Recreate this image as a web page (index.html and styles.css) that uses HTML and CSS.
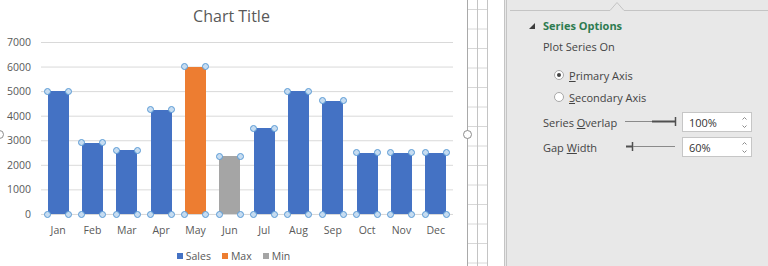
FILE: index.html
```html
<!DOCTYPE html>
<html lang="en">
<head>
    <meta charset="UTF-8">
    <meta name="viewport" content="width=device-width, initial-scale=1.0">
    <title>Format Data Series</title>
    <link rel="stylesheet" href="styles.css">
</head>
<body>
    <div class="chart">
        <span class="frame-handle left"></span>
        <span class="frame-handle right"></span>

        <h2 class="chart-title">Chart Title</h2>

        <div class="plot-row">
            <div class="y-axis">
                <span>7000</span>
                <span>6000</span>
                <span>5000</span>
                <span>4000</span>
                <span>3000</span>
                <span>2000</span>
                <span>1000</span>
                <span>0</span>
            </div>
            <div class="plot">
                <div class="col"><div class="bar sales" style="height: 71.43%"><i class="h tl"></i><i class="h tr"></i><i class="h bl"></i><i class="h br"></i></div></div>
                <div class="col"><div class="bar sales" style="height: 41.43%"><i class="h tl"></i><i class="h tr"></i><i class="h bl"></i><i class="h br"></i></div></div>
                <div class="col"><div class="bar sales" style="height: 37.14%"><i class="h tl"></i><i class="h tr"></i><i class="h bl"></i><i class="h br"></i></div></div>
                <div class="col"><div class="bar sales" style="height: 60.71%"><i class="h tl"></i><i class="h tr"></i><i class="h bl"></i><i class="h br"></i></div></div>
                <div class="col"><div class="bar max" style="height: 85.71%"><i class="h tl"></i><i class="h tr"></i><i class="h bl"></i><i class="h br"></i></div></div>
                <div class="col"><div class="bar min" style="height: 33.57%"><i class="h tl"></i><i class="h tr"></i><i class="h bl"></i><i class="h br"></i></div></div>
                <div class="col"><div class="bar sales" style="height: 50%"><i class="h tl"></i><i class="h tr"></i><i class="h bl"></i><i class="h br"></i></div></div>
                <div class="col"><div class="bar sales" style="height: 71.43%"><i class="h tl"></i><i class="h tr"></i><i class="h bl"></i><i class="h br"></i></div></div>
                <div class="col"><div class="bar sales" style="height: 65.71%"><i class="h tl"></i><i class="h tr"></i><i class="h bl"></i><i class="h br"></i></div></div>
                <div class="col"><div class="bar sales" style="height: 35.71%"><i class="h tl"></i><i class="h tr"></i><i class="h bl"></i><i class="h br"></i></div></div>
                <div class="col"><div class="bar sales" style="height: 35.71%"><i class="h tl"></i><i class="h tr"></i><i class="h bl"></i><i class="h br"></i></div></div>
                <div class="col"><div class="bar sales" style="height: 35.71%"><i class="h tl"></i><i class="h tr"></i><i class="h bl"></i><i class="h br"></i></div></div>
            </div>
        </div>

        <div class="x-axis">
            <span>Jan</span><span>Feb</span><span>Mar</span><span>Apr</span>
            <span>May</span><span>Jun</span><span>Jul</span><span>Aug</span>
            <span>Sep</span><span>Oct</span><span>Nov</span><span>Dec</span>
        </div>

        <div class="legend">
            <span class="legend-item"><i class="swatch sales"></i>Sales</span>
            <span class="legend-item"><i class="swatch max"></i>Max</span>
            <span class="legend-item"><i class="swatch min"></i>Min</span>
        </div>
    </div>

    <div class="cells">
        <div class="cell"></div>
        <div class="cell"></div>
    </div>
    <div class="gap"></div>

    <div class="pane">
        <svg class="pane-head" width="261" height="12" viewBox="0 0 261 12">
            <polyline points="3,10.5 103,10.5 110,2.5 117,10.5 261,10.5" fill="none" stroke="#c4c4c4" stroke-width="1"/>
        </svg>

        <div class="section-head">
            <svg width="6" height="6" viewBox="0 0 6 6"><polygon points="6,0 6,6 0,6" fill="#3c3c3c"/></svg>
            <span>Series Options</span>
        </div>

        <div class="label-row">Plot Series On</div>

        <div class="radios">
            <div class="radio-row">
                <span class="radio checked"></span>
                <span><u>P</u>rimary Axis</span>
            </div>
            <div class="radio-row">
                <span class="radio"></span>
                <span><u>S</u>econdary Axis</span>
            </div>
        </div>

        <div class="spin-row">
            <span class="spin-label">Series <u>O</u>verlap</span>
            <svg class="slider" width="52" height="20" viewBox="0 0 52 20">
                <line x1="0" y1="9.5" x2="27" y2="9.5" stroke="#8a8a8a" stroke-width="1"/>
                <line x1="27" y1="9.5" x2="50" y2="9.5" stroke="#505050" stroke-width="2"/>
                <line x1="50.5" y1="5" x2="50.5" y2="14" stroke="#505050" stroke-width="1.5"/>
            </svg>
            <div class="spin-box">
                <span>100%</span>
                <span class="arrows">
                    <svg width="5" height="3" viewBox="0 0 5 3"><polyline points="0.5,2.5 2.5,0.5 4.5,2.5" fill="none" stroke="#8a8a8a"/></svg>
                    <svg width="5" height="3" viewBox="0 0 5 3"><polyline points="0.5,0.5 2.5,2.5 4.5,0.5" fill="none" stroke="#8a8a8a"/></svg>
                </span>
            </div>
        </div>

        <div class="spin-row">
            <span class="spin-label">Gap <u>W</u>idth</span>
            <svg class="slider" width="52" height="20" viewBox="0 0 52 20">
                <line x1="1" y1="9.5" x2="7" y2="9.5" stroke="#505050" stroke-width="2"/>
                <line x1="7.5" y1="5" x2="7.5" y2="14" stroke="#505050" stroke-width="1.5"/>
                <line x1="8" y1="9.5" x2="50" y2="9.5" stroke="#8a8a8a" stroke-width="1"/>
            </svg>
            <div class="spin-box">
                <span>60%</span>
                <span class="arrows">
                    <svg width="5" height="3" viewBox="0 0 5 3"><polyline points="0.5,2.5 2.5,0.5 4.5,2.5" fill="none" stroke="#8a8a8a"/></svg>
                    <svg width="5" height="3" viewBox="0 0 5 3"><polyline points="0.5,0.5 2.5,2.5 4.5,0.5" fill="none" stroke="#8a8a8a"/></svg>
                </span>
            </div>
        </div>
    </div>
</body>
</html>
```

FILE: styles.css
```css
* {
    box-sizing: border-box;
}

body {
    margin: 0;
    width: 768px;
    height: 266px;
    overflow: hidden;
    display: flex;
    background: #fff;
    font-family: "Open Sans", "Noto Sans", sans-serif;
}

/* chart */

.chart {
    position: relative;
    width: 468px;
    border-right: 1px solid #a9a9a9;
    color: #595959;
    font-size: 10.5px;
}

.frame-handle {
    position: absolute;
    top: 130px;
    width: 9px;
    height: 9px;
    border: 1px solid #8c8c8c;
    border-radius: 50%;
    background: #fff;
}

.frame-handle.left {
    left: -5px;
}

.frame-handle.right {
    right: -5px;
}

.chart-title {
    margin: 0;
    height: 32px;
    line-height: 32px;
    padding-right: 4px;
    text-align: center;
    font-size: 16px;
    font-weight: normal;
}

.plot-row {
    display: flex;
    margin-top: 10px;
}

.y-axis {
    width: 41px;
    height: 186px;
    margin: -7px 0;
    padding-right: 10px;
    display: flex;
    flex-direction: column;
    justify-content: space-between;
    align-items: flex-end;
}

.y-axis span {
    line-height: 14px;
}

.plot {
    width: 412px;
    height: 173px;
    display: flex;
    align-items: flex-end;
    border-bottom: 1px solid #d9d9d9;
    background-image: linear-gradient(#d9d9d9 1px, transparent 1px);
    background-size: 100% 24.571px;
}

.col {
    flex: 1;
    height: 100%;
    display: flex;
    justify-content: center;
    align-items: flex-end;
}

.bar {
    position: relative;
    width: 21px;
}

.sales {
    background: #4472c4;
}

.max {
    background: #ed7d31;
}

.min {
    background: #a5a5a5;
}

.h {
    position: absolute;
    width: 7px;
    height: 7px;
    border: 1.5px solid #5b9bd5;
    border-radius: 50%;
    background: #c6dcf1;
}

.h.tl { top: -3.5px; left: -3.5px; }
.h.tr { top: -3.5px; right: -3.5px; }
.h.bl { bottom: -3.5px; left: -3.5px; }
.h.br { bottom: -3.5px; right: -3.5px; }

.x-axis {
    display: flex;
    width: 412px;
    margin: 8px 0 0 41px;
}

.x-axis span {
    flex: 1;
    text-align: center;
    line-height: 14px;
}

.legend {
    display: flex;
    justify-content: center;
    gap: 11px;
    margin-top: 12px;
    line-height: 14px;
}

.legend-item {
    display: flex;
    align-items: center;
    gap: 3px;
}

.swatch {
    width: 6px;
    height: 6px;
}

/* worksheet strip behind the chart */

.cells {
    width: 20px;
    display: flex;
    background-image: linear-gradient(transparent 18.5px, #d6d6d6 18.5px);
    background-size: 100% 19.5px;
    background-position: 0 -9.5px;
}

.cell {
    width: 10px;
    border-right: 1px solid #c4c4c4;
}

.gap {
    width: 16px;
}

/* format pane */

.pane {
    width: 264px;
    border-left: 3px double #c4c4c4;
    background: #e8e8e8;
    color: #444;
    font-size: 11px;
}

.pane-head {
    display: block;
}

.section-head {
    display: flex;
    align-items: center;
    gap: 8px;
    height: 16px;
    margin: 5px 0 0 22px;
    color: #2d7b50;
    font-weight: bold;
}

.section-head svg {
    margin-top: 2px;
}

.label-row {
    margin-top: 6px;
    padding-left: 36px;
    line-height: 16px;
}

.radios {
    margin-top: 9px;
    padding-left: 47px;
}

.radio-row {
    display: flex;
    align-items: center;
    gap: 5px;
    height: 22px;
}

.radio {
    position: relative;
    width: 10px;
    height: 10px;
    border: 1px solid #a8a8a8;
    border-radius: 50%;
    background: #fff;
}

.radio.checked::after {
    content: "";
    position: absolute;
    top: 2px;
    left: 2px;
    width: 4px;
    height: 4px;
    border-radius: 50%;
    background: #444;
}

.spin-row {
    display: flex;
    align-items: center;
    height: 20px;
    margin-top: 5px;
    padding-left: 36px;
}

.radios + .spin-row {
    margin-top: 4px;
}

.spin-label {
    width: 82px;
}

.spin-box {
    display: flex;
    justify-content: space-between;
    align-items: center;
    width: 70px;
    height: 20px;
    margin-left: 5px;
    padding: 0 4px 0 6px;
    border: 1px solid #c6c6c6;
    background: #fff;
    color: #333;
}

.arrows {
    display: flex;
    flex-direction: column;
    gap: 5px;
}

.arrows svg {
    display: block;
}
```
